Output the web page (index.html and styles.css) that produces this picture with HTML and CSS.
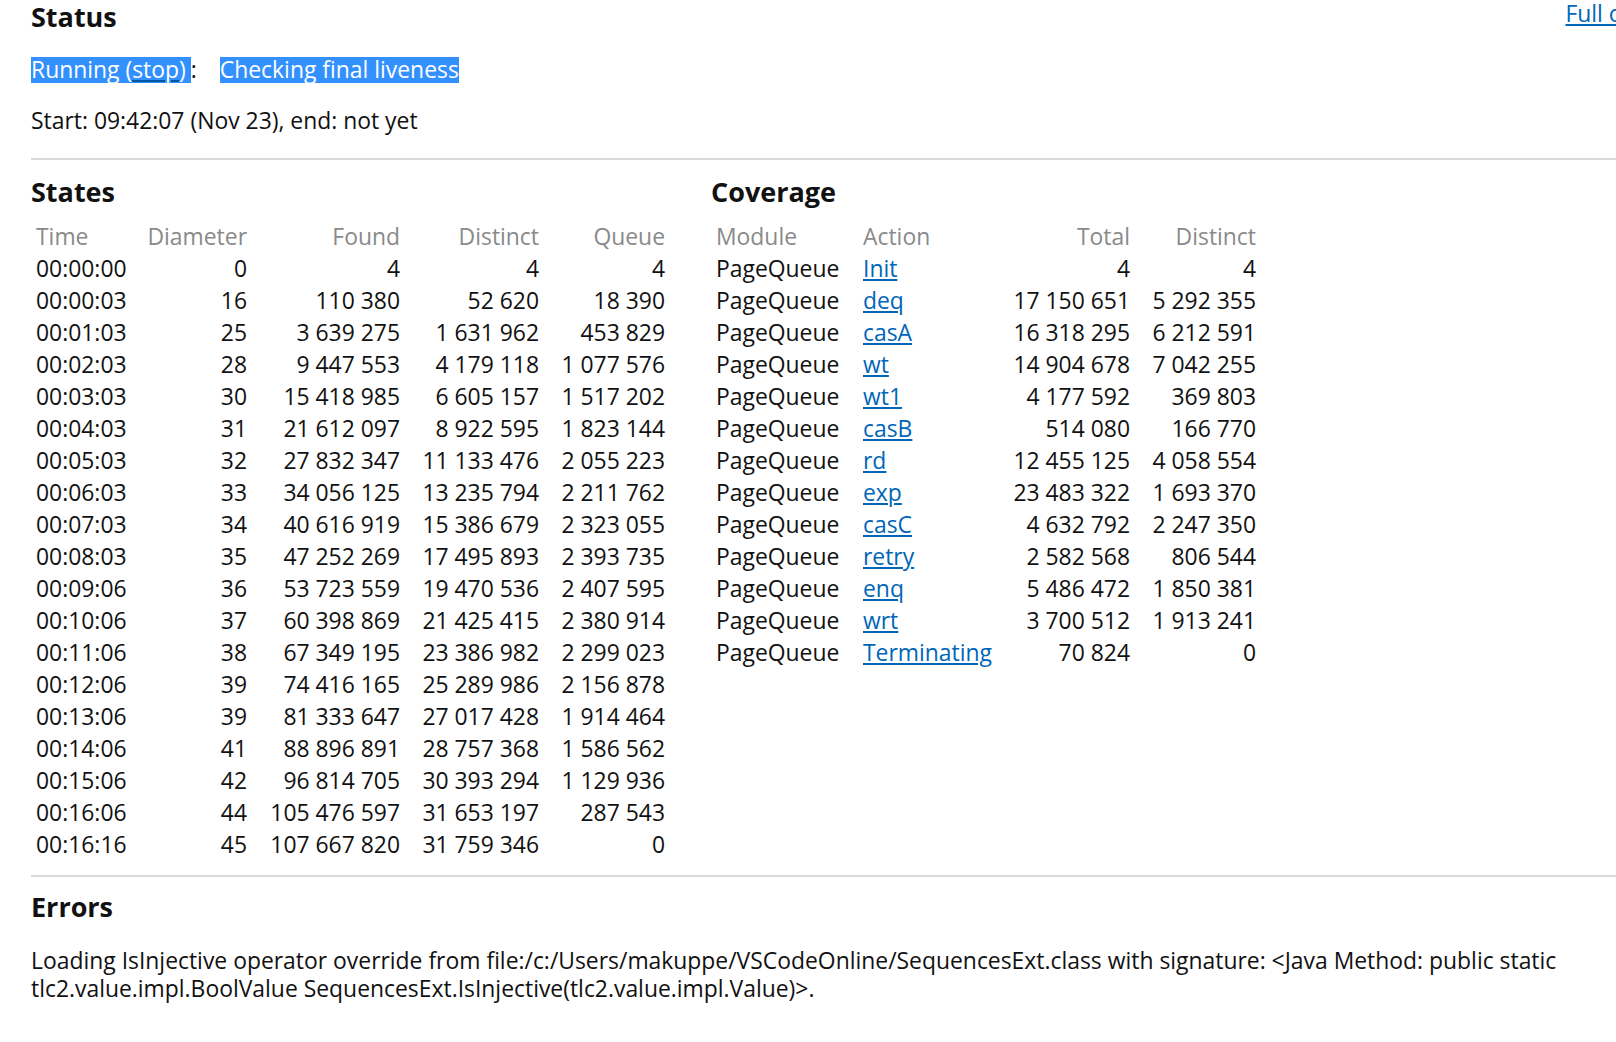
FILE: index.html
```html
<!DOCTYPE html>
<html>
<head>
<meta charset="utf-8">
<link rel="stylesheet" href="styles.css">
</head>
<body>
<div class="page">
  <header class="top">
    <h2 class="title">Status</h2>
    <a class="link full" href="#">Full output</a>
  </header>
  <p class="state"><span class="sel">Running (<a class="link stoplink" href="#">stop</a>)</span>:<span class="gap"></span><span class="sel">Checking final liveness</span></p>
  <p class="start">Start: 09:42:07 (Nov 23), end: not yet</p>
  <hr class="rule">
  <div class="cols">
    <section class="states">
      <h2 class="title">States</h2>
      <table class="grid tstates">
        <colgroup><col class="c-time"><col class="c-dia"><col class="c-found"><col class="c-dist"><col class="c-queue"></colgroup>
        <thead><tr><th class="l">Time</th><th>Diameter</th><th>Found</th><th>Distinct</th><th>Queue</th></tr></thead>
        <tbody>
          <tr><td class="l">00:00:00</td><td>0</td><td>4</td><td>4</td><td>4</td></tr>
          <tr><td class="l">00:00:03</td><td>16</td><td>110 380</td><td>52 620</td><td>18 390</td></tr>
          <tr><td class="l">00:01:03</td><td>25</td><td>3 639 275</td><td>1 631 962</td><td>453 829</td></tr>
          <tr><td class="l">00:02:03</td><td>28</td><td>9 447 553</td><td>4 179 118</td><td>1 077 576</td></tr>
          <tr><td class="l">00:03:03</td><td>30</td><td>15 418 985</td><td>6 605 157</td><td>1 517 202</td></tr>
          <tr><td class="l">00:04:03</td><td>31</td><td>21 612 097</td><td>8 922 595</td><td>1 823 144</td></tr>
          <tr><td class="l">00:05:03</td><td>32</td><td>27 832 347</td><td>11 133 476</td><td>2 055 223</td></tr>
          <tr><td class="l">00:06:03</td><td>33</td><td>34 056 125</td><td>13 235 794</td><td>2 211 762</td></tr>
          <tr><td class="l">00:07:03</td><td>34</td><td>40 616 919</td><td>15 386 679</td><td>2 323 055</td></tr>
          <tr><td class="l">00:08:03</td><td>35</td><td>47 252 269</td><td>17 495 893</td><td>2 393 735</td></tr>
          <tr><td class="l">00:09:06</td><td>36</td><td>53 723 559</td><td>19 470 536</td><td>2 407 595</td></tr>
          <tr><td class="l">00:10:06</td><td>37</td><td>60 398 869</td><td>21 425 415</td><td>2 380 914</td></tr>
          <tr><td class="l">00:11:06</td><td>38</td><td>67 349 195</td><td>23 386 982</td><td>2 299 023</td></tr>
          <tr><td class="l">00:12:06</td><td>39</td><td>74 416 165</td><td>25 289 986</td><td>2 156 878</td></tr>
          <tr><td class="l">00:13:06</td><td>39</td><td>81 333 647</td><td>27 017 428</td><td>1 914 464</td></tr>
          <tr><td class="l">00:14:06</td><td>41</td><td>88 896 891</td><td>28 757 368</td><td>1 586 562</td></tr>
          <tr><td class="l">00:15:06</td><td>42</td><td>96 814 705</td><td>30 393 294</td><td>1 129 936</td></tr>
          <tr><td class="l">00:16:06</td><td>44</td><td>105 476 597</td><td>31 653 197</td><td>287 543</td></tr>
          <tr><td class="l">00:16:16</td><td>45</td><td>107 667 820</td><td>31 759 346</td><td>0</td></tr>
        </tbody>
      </table>
    </section>
    <section class="coverage">
      <h2 class="title">Coverage</h2>
      <table class="grid tcov">
        <colgroup><col class="c-mod"><col class="c-act"><col class="c-total"><col class="c-cdist"></colgroup>
        <thead><tr><th class="l">Module</th><th class="l">Action</th><th>Total</th><th>Distinct</th></tr></thead>
        <tbody>
          <tr><td class="l">PageQueue</td><td class="l"><a class="link" href="#">Init</a></td><td>4</td><td>4</td></tr>
          <tr><td class="l">PageQueue</td><td class="l"><a class="link" href="#">deq</a></td><td>17 150 651</td><td>5 292 355</td></tr>
          <tr><td class="l">PageQueue</td><td class="l"><a class="link" href="#">casA</a></td><td>16 318 295</td><td>6 212 591</td></tr>
          <tr><td class="l">PageQueue</td><td class="l"><a class="link" href="#">wt</a></td><td>14 904 678</td><td>7 042 255</td></tr>
          <tr><td class="l">PageQueue</td><td class="l"><a class="link" href="#">wt1</a></td><td>4 177 592</td><td>369 803</td></tr>
          <tr><td class="l">PageQueue</td><td class="l"><a class="link" href="#">casB</a></td><td>514 080</td><td>166 770</td></tr>
          <tr><td class="l">PageQueue</td><td class="l"><a class="link" href="#">rd</a></td><td>12 455 125</td><td>4 058 554</td></tr>
          <tr><td class="l">PageQueue</td><td class="l"><a class="link" href="#">exp</a></td><td>23 483 322</td><td>1 693 370</td></tr>
          <tr><td class="l">PageQueue</td><td class="l"><a class="link" href="#">casC</a></td><td>4 632 792</td><td>2 247 350</td></tr>
          <tr><td class="l">PageQueue</td><td class="l"><a class="link" href="#">retry</a></td><td>2 582 568</td><td>806 544</td></tr>
          <tr><td class="l">PageQueue</td><td class="l"><a class="link" href="#">enq</a></td><td>5 486 472</td><td>1 850 381</td></tr>
          <tr><td class="l">PageQueue</td><td class="l"><a class="link" href="#">wrt</a></td><td>3 700 512</td><td>1 913 241</td></tr>
          <tr><td class="l">PageQueue</td><td class="l"><a class="link" href="#">Terminating</a></td><td>70 824</td><td>0</td></tr>
        </tbody>
      </table>
    </section>
  </div>
  <hr class="rule rule2">
  <h2 class="title errtitle">Errors</h2>
  <p class="err">Loading IsInjective operator override from file:/c:/Users/makuppe/VSCodeOnline/SequencesExt.class with signature: &lt;Java Method: public static tlc2.value.impl.BoolValue SequencesExt.IsInjective(tlc2.value.impl.Value)&gt;.</p>
</div>
</body>
</html>
```

FILE: styles.css
```css
html, body {
  margin: 0;
  padding: 0;
  background: #fff;
  overflow: hidden;
}
body {
  font-family: "Open Sans", "Noto Sans", sans-serif;
  font-size: 22.9px;
  color: #111;
}
.page {
  width: 1650px;
  padding: 0 0 0 31px;
}
.top {
  display: flex;
  justify-content: space-between;
  align-items: flex-start;
}
.title {
  margin: 0;
  font-size: 27px;
  font-weight: 700;
  color: #111;
  line-height: 33px;
}
.link {
  color: #0066b8;
  text-decoration: underline;
}
.full {
  line-height: 28px;
}
.state {
  margin: 24px 0 0 0;
  line-height: 26px;
}
.sel {
  display: inline-block;
  background: #3390ff;
  color: #fff;
  line-height: 26px;
}
.sel:first-child { padding-right: 5px; }
.sel .stoplink { color: #fff; text-decoration-color: #0055a0; }
.gap { display: inline-block; width: 23px; }
.start {
  margin: 25px 0 0 0;
  line-height: 26px;
}
.rule {
  border: 0;
  border-top: 2px solid #d9d9d9;
  margin: 24px 0 0 0;
}
.cols {
  display: flex;
  gap: 41px;
  margin-top: 15px;
}
.grid {
  border-collapse: collapse;
  table-layout: fixed;
  margin-top: 13px;
}
.grid th, .grid td {
  padding: 0 5px;
  height: 32px;
  line-height: 32px;
  text-align: right;
  white-space: nowrap;
  font-weight: 400;
}
.grid th { color: #8a8a8a; }
.grid .l { text-align: left; }
.c-time { width: 95px; }
.c-dia { width: 126px; }
.c-found { width: 153px; }
.c-dist { width: 139px; }
.c-queue { width: 126px; }
.tstates { width: 639px; }
.c-mod { width: 147px; }
.c-act { width: 137px; }
.c-total { width: 140px; }
.c-cdist { width: 126px; }
.tcov { width: 550px; }
.rule2 { margin-top: 14px; }
.errtitle { margin-top: 13px; }
.err {
  margin: 24px 0 0 0;
  line-height: 28px;
}
```
